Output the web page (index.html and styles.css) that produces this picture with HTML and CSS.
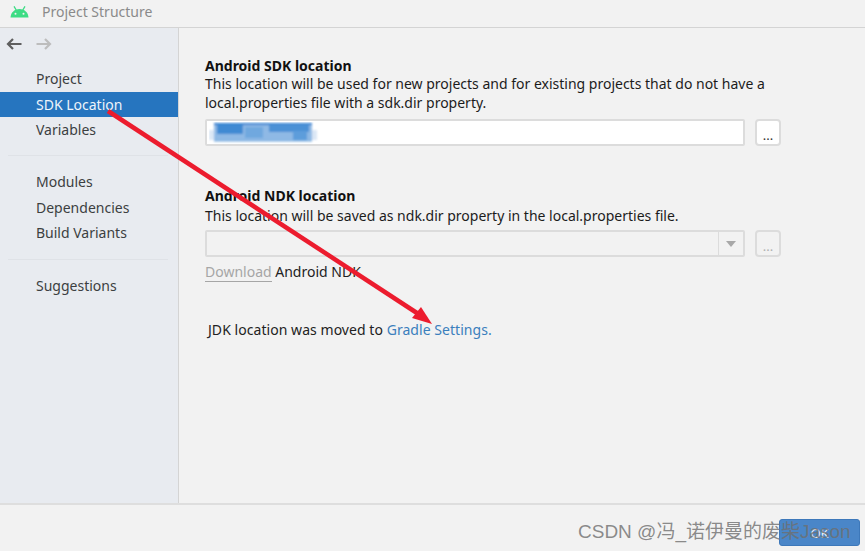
FILE: index.html
```html
<!DOCTYPE html>
<html lang="en">
<head>
    <meta charset="UTF-8">
    <meta name="viewport" content="width=device-width, initial-scale=1.0">
    <title>Project Structure</title>
    <link rel="stylesheet" href="styles.css">
</head>
<body>

    <header class="title-bar">
        <svg class="android-logo" width="19" height="12" viewBox="0 0 19 12">
            <path d="M0.500 11.500C0.800 6.500 4.500 3 9.500 3s8.700 3.500 9 8.500z" fill="#3ddc84"/>
            <path d="M4 0.300L6.500 4.500M15 0.300L12.500 4.500" stroke="#3ddc84" stroke-width="1.300" fill="none"/>
            <circle cx="5.500" cy="7.800" r="1" fill="#f2f2f2"/>
            <circle cx="13.500" cy="7.800" r="1" fill="#f2f2f2"/>
        </svg>
        <span class="title">Project Structure</span>
    </header>

    <div class="content">
        <nav class="sidebar">
            <div class="history">
                <svg width="16" height="12" viewBox="0 0 16 12">
                    <path d="M15.500 6H2M7 1L2 6l5 5" stroke="#5f5f5f" stroke-width="2.200" fill="none"/>
                </svg>
                <svg width="16" height="12" viewBox="0 0 16 12">
                    <path d="M0.500 6h13M9 1l5 5-5 5" stroke="#bdbdbd" stroke-width="2.200" fill="none"/>
                </svg>
            </div>
            <ul class="nav-group">
                <li class="nav-item">Project</li>
                <li class="nav-item active">SDK Location</li>
                <li class="nav-item">Variables</li>
            </ul>
            <ul class="nav-group">
                <li class="nav-item">Modules</li>
                <li class="nav-item">Dependencies</li>
                <li class="nav-item">Build Variants</li>
            </ul>
            <ul class="nav-group">
                <li class="nav-item">Suggestions</li>
            </ul>
        </nav>

        <main class="panel">
            <section class="block block-sdk">
                <h2>Android SDK location</h2>
                <p>This location will be used for new projects and for existing projects that do not have a<br>local.properties file with a sdk.dir property.</p>
                <div class="field-row">
                    <div class="field">
                        <svg class="redacted" width="112" height="22" viewBox="0 0 112 22">
                            <defs><filter id="soft"><feGaussianBlur stdDeviation="1"/></filter></defs>
                            <g filter="url(#soft)">
                                <rect x="0" y="8" width="108" height="10" fill="#dbe7f5"/>
                                <rect x="5" y="1" width="98" height="17" fill="#8fb9e5"/>
                                <rect x="5" y="1" width="98" height="2" fill="#2f7fd0"/>
                                <rect x="8" y="2" width="26" height="10" fill="#3f8ad3"/>
                                <rect x="36" y="5" width="18" height="11" fill="#6fa8df"/>
                                <rect x="60" y="2" width="40" height="8" fill="#4b91d6"/>
                                <rect x="84" y="9" width="14" height="9" fill="#5d9ddb"/>
                                <rect x="5" y="18" width="98" height="1.500" fill="#7fb0e0"/>
                            </g>
                        </svg>
                    </div>
                    <button class="browse">...</button>
                </div>
            </section>

            <section class="block block-ndk">
                <h2>Android NDK location</h2>
                <p>This location will be saved as ndk.dir property in the local.properties file.</p>
                <div class="field-row">
                    <div class="field disabled">
                        <span class="combo-arrow"></span>
                    </div>
                    <button class="browse disabled">...</button>
                </div>
                <p class="download"><span class="download-link">Download</span> Android NDK</p>
            </section>

            <p class="jdk">JDK location was moved to <a class="link">Gradle Settings.</a></p>
        </main>
    </div>

    <footer class="footer">
        <button class="ok">OK</button>
    </footer>

    <svg class="arrow" width="865" height="551" viewBox="0 0 865 551">
        <line x1="108" y1="111" x2="420" y2="315" stroke="#ec1c2e" stroke-width="4.500"/>
        <polygon points="432,324 412,318 421,307" fill="#ec1c2e"/>
    </svg>

    <div class="watermark">CSDN @冯_诺伊曼的废柴Jason</div>

</body>
</html>
```

FILE: styles.css
```css
* {
    box-sizing: border-box;
}

body {
    margin: 0;
    width: 865px;
    height: 551px;
    overflow: hidden;
    display: flex;
    flex-direction: column;
    font-family: "Noto Sans", "Open Sans", sans-serif;
    font-size: 14px;
    color: #1c1c1c;
    background-color: #f2f2f2;
}

.title-bar {
    height: 28px;
    display: flex;
    align-items: center;
    gap: 13px;
    padding: 0 0 4px 10px;
    border-bottom: 1px solid #d4d4d4;
}

.title {
    font-size: 14px;
    color: #8a8a8a;
}

.content {
    flex: 1;
    display: flex;
    min-height: 0;
}

.sidebar {
    width: 179px;
    background-color: #e8ebf0;
    border-right: 1px solid #d4d4d4;
}

.history {
    height: 32px;
    display: flex;
    align-items: center;
    gap: 14px;
    padding-left: 6px;
}

.nav-group {
    list-style: none;
    margin: 0 10px 0 8px;
    padding: 6px 0 12px;
    border-bottom: 1px solid #dfe2e7;
}

.nav-group:last-child {
    border-bottom: none;
}

.nav-group + .nav-group {
    padding-top: 13px;
    padding-bottom: 13px;
}

.nav-item {
    height: 25.700px;
    line-height: 25px;
    padding-left: 36px;
    color: #3c3f41;
    margin: 0 -10px 0 -8px;
}

.nav-item.active {
    background-color: #2675bf;
    color: #eef4fa;
}

.panel {
    flex: 1;
    padding: 29px 84px 0 26px;
}

h2 {
    margin: 0;
    font-size: 14px;
    font-weight: 700;
    line-height: 17px;
    color: #111;
}

p {
    margin: 0;
    line-height: 19px;
}

.field-row {
    display: flex;
    gap: 10px;
    margin-top: 7px;
}

.field {
    flex: 1;
    height: 27px;
    position: relative;
    background-color: #fff;
    border: 2px solid #dcdcdc;
    border-radius: 2px;
    overflow: hidden;
}

.field.disabled {
    background-color: #f2f2f2;
}

.redacted {
    display: block;
    margin: 1px 0 0 2px;
}

.combo-arrow {
    position: absolute;
    top: 0;
    right: 0;
    width: 25px;
    height: 100%;
    border-left: 1px solid #dcdcdc;
}

.combo-arrow::after {
    content: "";
    position: absolute;
    top: 9px;
    left: 7px;
    border-style: solid;
    border-width: 6px 5px 0;
    border-color: #a8a8a8 transparent transparent;
}

.browse {
    width: 26px;
    height: 27px;
    padding: 5px 0 0;
    font-family: inherit;
    font-size: 13px;
    line-height: 1;
    color: #333;
    background-color: #fff;
    border: 2px solid #dcdcdc;
    border-radius: 4px;
}

.browse.disabled {
    color: #b0b0b0;
    background-color: #f2f2f2;
}

.block-sdk {
    margin-bottom: 41px;
}

.block-ndk h2 {
    margin-bottom: 2px;
}

.block-ndk .field-row {
    margin-top: 5px;
}

.download {
    margin-top: 5px;
    color: #222;
}

.download-link {
    color: #a6a6a6;
    border-bottom: 1px solid #a6a6a6;
}

.jdk {
    margin: 39px 0 0 3px;
    letter-spacing: 0.05px;
    color: #222;
}

.link {
    color: #3b7fbd;
}

.footer {
    height: 48px;
    display: flex;
    justify-content: flex-end;
    align-items: flex-start;
    padding: 14px 5px 0 0;
    border-top: 2px solid #dedede;
}

.ok {
    width: 81px;
    height: 27px;
    font-family: inherit;
    font-size: 13px;
    color: #e8eef6;
    background-color: #4a86c8;
    border: 1px solid #3d78ba;
    border-radius: 3px;
}

.arrow {
    position: absolute;
    top: 0;
    left: 0;
    pointer-events: none;
}

.watermark {
    position: absolute;
    top: 520px;
    left: 578px;
    font-family: "Liberation Sans", "Noto Sans CJK SC", sans-serif;
    font-size: 19px;
    line-height: 24px;
    white-space: nowrap;
    color: rgba(110, 110, 110, 0.8);
}
```
